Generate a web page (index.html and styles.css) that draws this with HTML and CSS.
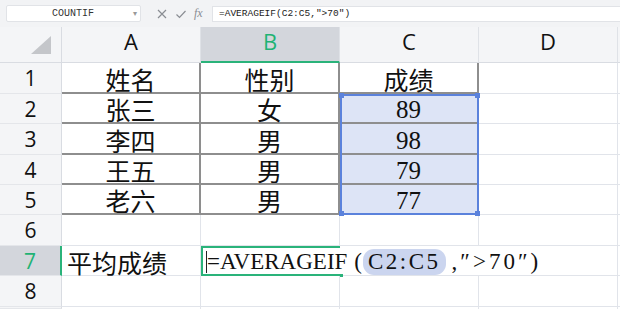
FILE: index.html
```html
<!DOCTYPE html>
<html lang="zh">
<head>
<meta charset="utf-8">
<title>AVERAGEIF</title>
<link rel="stylesheet" href="styles.css">
</head>
<body>
<div class="topbar">
  <div class="namebox"><span class="name">COUNTIF</span><span class="dd">▾</span></div>
  <div class="tools">
    <svg class="ico" width="12" height="12" viewBox="0 0 12 12"><path d="M2 2 L10 10 M10 2 L2 10" stroke="#8a8d93" stroke-width="1.2" fill="none"/></svg>
    <svg class="ico" width="12" height="12" viewBox="0 0 12 12"><path d="M1.5 6.5 L4.5 9.5 L10.5 3" stroke="#8a8d93" stroke-width="1.2" fill="none"/></svg>
    <span class="fx">fx</span>
  </div>
  <div class="formula">=AVERAGEIF(C2:C5,″&gt;70″)</div>
</div>
<div class="sheet">
  <div class="corner"><svg width="20" height="18" viewBox="0 0 20 18"><polygon points="20,0 20,18 0,18" fill="#c4c6ca"/></svg></div>
  <div class="colh">A</div>
  <div class="colh active">B</div>
  <div class="colh">C</div>
  <div class="colh">D</div>
  <div class="colh edge"></div>

  <div class="rowh">1</div>
  <div class="cell tb">姓名</div>
  <div class="cell tb">性别</div>
  <div class="cell tb">成绩</div>
  <div class="cell"></div>
  <div class="cell edge"></div>

  <div class="rowh">2</div>
  <div class="cell tb">张三</div>
  <div class="cell tb">女</div>
  <div class="cell tb sel anchor num">89<div class="selframe"><span class="h tl"></span><span class="h tr"></span><span class="h bl"></span><span class="h br"></span></div></div>
  <div class="cell"></div>
  <div class="cell edge"></div>

  <div class="rowh">3</div>
  <div class="cell tb">李四</div>
  <div class="cell tb">男</div>
  <div class="cell tb sel num">98</div>
  <div class="cell"></div>
  <div class="cell edge"></div>

  <div class="rowh">4</div>
  <div class="cell tb">王五</div>
  <div class="cell tb">男</div>
  <div class="cell tb sel num">79</div>
  <div class="cell"></div>
  <div class="cell edge"></div>

  <div class="rowh">5</div>
  <div class="cell tb">老六</div>
  <div class="cell tb">男</div>
  <div class="cell tb sel num">77</div>
  <div class="cell"></div>
  <div class="cell edge"></div>

  <div class="rowh">6</div>
  <div class="cell"></div>
  <div class="cell"></div>
  <div class="cell"></div>
  <div class="cell"></div>
  <div class="cell edge"></div>

  <div class="rowh active">7</div>
  <div class="cell left">平均成绩</div>
  <div class="cell active"><span class="caret"></span>=AVERAGEIF<span class="paren">(</span><span class="ref">C2:C5</span><span class="tail">,″&gt;70″)</span><span class="tick"></span></div>
  <div class="cell nor"></div>
  <div class="cell"></div>
  <div class="cell edge"></div>

  <div class="rowh">8</div>
  <div class="cell"></div>
  <div class="cell"></div>
  <div class="cell"></div>
  <div class="cell"></div>
  <div class="cell edge"></div>

  <div class="rowh"></div>
  <div class="cell"></div>
  <div class="cell"></div>
  <div class="cell"></div>
  <div class="cell"></div>
  <div class="cell edge"></div>
</div>
</body>
</html>
```
FILE: styles.css
```css
* { box-sizing: border-box; }
html, body { margin: 0; padding: 0; }
body {
  width: 620px;
  height: 309px;
  overflow: hidden;
  background: #ffffff;
  font-family: "Liberation Serif", "Noto Sans CJK SC", serif;
  color: #111;
}
.topbar {
  height: 27px;
  background: #f2f3f5;
  display: flex;
  align-items: center;
  padding: 0 0 0 6px;
}
.namebox {
  width: 135px;
  height: 17px;
  background: #fff;
  border: 1px solid #e1e3e7;
  border-radius: 2px;
  display: flex;
  align-items: center;
}
.name {
  flex: 1;
  text-align: center;
  font-family: "Liberation Mono", monospace;
  font-size: 10px;
  color: #333;
  padding-left: 6px;
}
.dd {
  font-size: 8px;
  color: #999;
  margin-right: 3px;
}
.tools {
  width: 71px;
  display: flex;
  align-items: center;
  gap: 7px;
  padding-left: 15px;
}
.fx {
  font-family: "Liberation Serif", serif;
  font-style: italic;
  font-size: 12px;
  color: #8a8d93;
}
.formula {
  flex: 1;
  height: 16px;
  background: #fff;
  border: 1px solid #e1e3e7;
  border-right: none;
  display: flex;
  align-items: center;
  padding-left: 6px;
  font-family: "Liberation Mono", monospace;
  font-size: 9.5px;
  color: #222;
}
.sheet {
  display: grid;
  grid-template-columns: 62px 139px 139px 139px 139px 2px;
  grid-template-rows: 36px 31px 30px 31px 30px 30px 31px 30px 31px 2px;
}
.corner {
  background: #f4f5f7;
  border-right: 1px solid #d9dce2;
  border-bottom: 1px solid #d9dce2;
  display: flex;
  align-items: flex-end;
  justify-content: flex-end;
  padding: 0 10px 8px 0;
}
.corner svg { display: block; }
.colh {
  background: #f4f5f7;
  border-right: 1px solid #dfe2e7;
  border-bottom: 1px solid #d9dce2;
  display: flex;
  align-items: center;
  justify-content: center;
  font-family: "Open Sans", "Noto Sans", sans-serif;
  font-size: 22px;
  color: #111;
  padding-bottom: 7px;
}
.colh.active {
  background: #d3d6dc;
  color: #1fb374;
  border-bottom: 2px solid #2ab37a;
}
.colh.edge, .cell.edge { border-right: none; }
.rowh {
  background: #f4f5f7;
  border-right: 1px solid #d9dce2;
  border-bottom: 1px solid #e4e6ea;
  display: flex;
  align-items: center;
  justify-content: center;
  font-family: "Open Sans", "Noto Sans", sans-serif;
  font-size: 21px;
  color: #111;
}
.rowh.active {
  background: #d3d6dc;
  color: #1fb374;
  border-right: 2px solid #2ab37a;
}
.cell {
  border-right: 1px solid #e1e4ea;
  border-bottom: 1px solid #e1e4ea;
  display: flex;
  align-items: center;
  justify-content: center;
  font-size: 25px;
  white-space: nowrap;
  padding-top: 2px;
}
.cell.num { padding-top: 4px; }
.cell.tb {
  border-right: 2px solid #8e8e8e;
  border-bottom: 2px solid #8e8e8e;
}
.cell.sel { background: #dde4f6; }
.cell.anchor { position: relative; }
.cell.left {
  justify-content: flex-start;
  padding-left: 5px;
}
.cell.active {
  justify-content: flex-start;
  border: 2px solid #2ab37a;
  border-right: none;
  overflow: visible;
  position: relative;
  z-index: 2;
  font-size: 23px;
  padding-left: 3px;
  padding-top: 2px;
}
.cell.nor { border-right: none; }
.caret {
  display: inline-block;
  width: 0;
  height: 22px;
  border-left: 1px solid #222;
}
.paren { margin: 0 0 0 7px; }
.ref {
  background: #cbd5ef;
  border-radius: 11px;
  padding: 0 5px 0 5px;
  letter-spacing: 2.5px;
  margin-left: 1px;
}
.tail {
  letter-spacing: 3px;
  margin-left: 6px;
}
.tick {
  position: absolute;
  right: -3px;
  bottom: -3px;
  width: 3px;
  height: 3px;
  background: #2ab37a;
}
.selframe {
  position: absolute;
  left: 0;
  top: 0;
  width: 139px;
  height: 121px;
  border: 2px solid #5b82dc;
  pointer-events: none;
  z-index: 3;
}
.h {
  position: absolute;
  width: 5px;
  height: 5px;
  background: #5b82dc;
}
.h.tl { left: -3px; top: -3px; }
.h.tr { right: -3px; top: -3px; }
.h.bl { left: -3px; bottom: -3px; }
.h.br { right: -3px; bottom: -3px; }
```
